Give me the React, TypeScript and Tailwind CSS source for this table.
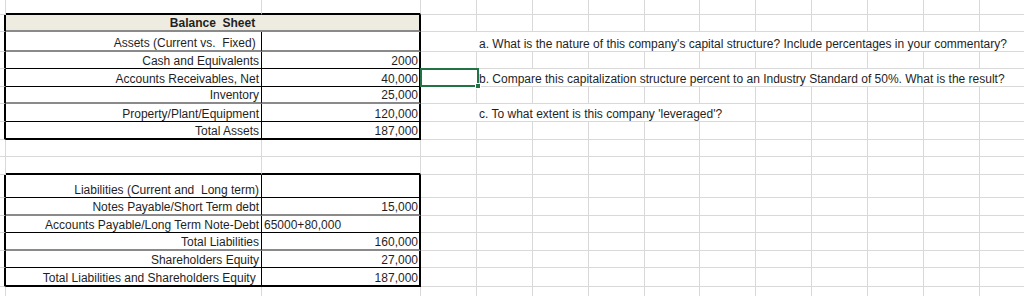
import React from 'react';

// border pieces (light gridline, black 1/2px, grey 2px)
const GR = 'border-r border-r-[#d9d9d9]';
const GB = 'border-b border-b-[#d9d9d9]';
const KR1 = 'border-r border-r-black';
const KR2 = 'border-r-2 border-r-black';
const KB1 = 'border-b border-b-black';
const KB2 = 'border-b-2 border-b-black';
const SB2 = 'border-b-2 border-b-[#8a8a8a]';

// col0, A, B, C, D ... M
const W = [
  'w-[6px]', 'w-[256px]', 'w-[159px]', 'w-[56px]', 'w-[56px]', 'w-[56px]', 'w-[56px]',
  'w-[55px]', 'w-[56px]', 'w-[56px]', 'w-[56px]', 'w-[56px]', 'w-[56px]', 'w-[56px]',
];

const QA = "a. What is the nature of this company's capital structure? Include percentages in your commentary?";
const QB = 'b. Compare this capitalization structure percent to an Industry Standard of 50%. What is the result?';
const QC = "c. To what extent is this company 'leveraged'?";

interface CellProps {
  w: string;
  r?: string;
  b?: string;
  className?: string;
  children?: React.ReactNode;
}

const Cell: React.FC<CellProps> = ({ w, r = GR, b = GB, className = '', children }) => (
  <div className={`${w} shrink-0 h-full flex items-end ${r} ${b} ${className}`}>{children}</div>
);

const Rest = ({ open = 0, q, sel = false }: { open?: number; q?: string; sel?: boolean }) => (
  <>
    {W.slice(3).map((w, i) => {
      const col = i + 3;
      return (
        <Cell
          key={col}
          w={w}
          r={col < open ? '' : GR}
          className={col === 3 && sel ? 'relative' : col === 4 && q ? 'pl-[2px]' : ''}
        >
          {col === 3 && sel && (
            <>
              <div className="absolute -left-px -top-px -right-[2px] -bottom-px border-2 border-[#217346] z-10" />
              <div className="absolute -right-[4px] -bottom-[3px] w-[6px] h-[6px] bg-[#217346] border border-white z-20" />
            </>
          )}
          {col === 4 && q && <span className="whitespace-pre">{q}</span>}
        </Cell>
      );
    })}
  </>
);

const PlainRow = ({ h, line = GB }: { h: string; line?: string }) => (
  <div className={`flex ${h}`}>
    <Cell w={W[0]} />
    <Cell w={W[1]} b={line} />
    <Cell w={W[2]} b={line} />
    <Rest />
  </div>
);

interface TableRowProps {
  h: string;
  label: string;
  value?: string;
  line: string;
  left?: boolean;
  open?: number;
  q?: string;
  sel?: boolean;
}

const TableRow: React.FC<TableRowProps> = ({ h, label, value = '', line, left, open, q, sel }) => (
  <div className={`flex ${h}`}>
    <Cell w={W[0]} r={KR2} />
    <Cell w={W[1]} r={KR1} b={line} className="justify-end pr-[2px]">
      <span className="whitespace-pre">{label}</span>
    </Cell>
    <Cell w={W[2]} r={KR2} b={line} className={left ? 'pl-[2px]' : 'justify-end pr-[1px]'}>
      <span className="whitespace-pre">{value}</span>
    </Cell>
    <Rest open={open} q={q} sel={sel} />
  </div>
);

export default function App() {
  return (
    <div className="w-[1024px] h-[296px] overflow-hidden bg-white font-['Liberation_Sans',Arial,sans-serif] text-[12px] leading-[14px] text-[#1f1f1f]">
      <PlainRow h="h-[15px]" line={KB2} />

      {/* Balance Sheet header (merged A:B) */}
      <div className="flex h-[17px]">
        <Cell w={W[0]} r={KR2} />
        <Cell w="w-[415px]" r={KR2} b={SB2} className="justify-center bg-[#eeece1]">
          <span className="whitespace-pre font-bold">Balance  Sheet</span>
        </Cell>
        <Rest />
      </div>

      <TableRow h="h-[20px]" label="Assets (Current vs.  Fixed) " line={SB2} q={QA} open={13} />
      <TableRow h="h-[17px]" label="Cash and Equivalents" value="2000" line={KB1} />
      <TableRow h="h-[18px]" label="Accounts Receivables, Net" value="40,000" line={KB1} q={QB} open={13} sel />
      <TableRow h="h-[17px]" label="Inventory" value="25,000" line={SB2} />
      <TableRow h="h-[18px]" label="Property/Plant/Equipment" value="120,000" line={KB1} q={QC} open={8} />
      <TableRow h="h-[18px]" label="Total Assets" value="187,000" line={KB2} />

      <PlainRow h="h-[17px]" />
      <PlainRow h="h-[18px]" line={KB2} />

      <TableRow h="h-[23px]" label="Liabilities (Current and  Long term)" line={KB1} />
      <TableRow h="h-[18px]" label="Notes Payable/Short Term debt" value="15,000" line={SB2} />
      <TableRow h="h-[17px]" label="Accounts Payable/Long Term Note-Debt" value="65000+80,000" line={KB1} left />
      <TableRow h="h-[18px]" label="Total Liabilities" value="160,000" line={SB2} />
      <TableRow h="h-[17px]" label="Shareholders Equity" value="27,000" line={KB1} />
      <TableRow h="h-[19px]" label="Total Liabilities and Shareholders Equity " value="187,000" line={KB2} />

      <PlainRow h="h-[18px]" />
    </div>
  );
}
